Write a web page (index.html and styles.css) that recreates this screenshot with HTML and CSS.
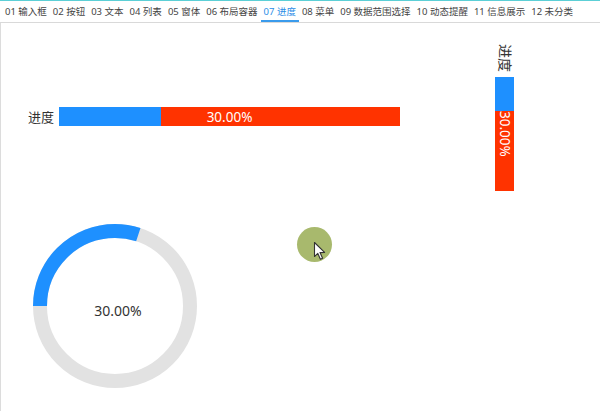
FILE: index.html
```html
<!DOCTYPE html>
<html lang="zh-CN">
<head>
    <meta charset="UTF-8">
    <title>07 进度</title>
    <link rel="stylesheet" href="styles.css">
</head>
<body>
    <div class="app">
        <!-- Tabs -->
        <div class="tabs">
            <span class="tab">01 输入框</span>
            <span class="tab">02 按钮</span>
            <span class="tab">03 文本</span>
            <span class="tab">04 列表</span>
            <span class="tab">05 窗体</span>
            <span class="tab">06 布局容器</span>
            <span class="tab active">07 进度</span>
            <span class="tab">08 菜单</span>
            <span class="tab">09 数据范围选择</span>
            <span class="tab">10 动态提醒</span>
            <span class="tab">11 信息展示</span>
            <span class="tab">12 未分类</span>
        </div>

        <!-- Page -->
        <div class="page">
            <div class="top-row">
                <div class="hbar-group">
                    <span class="bar-label">进度</span>
                    <div class="hbar">
                        <div class="hbar-fill" style="width: 30%;"></div>
                        <span class="bar-text">30.00%</span>
                    </div>
                </div>

                <div class="vbar-group">
                    <span class="vbar-label">进度</span>
                    <div class="vbar">
                        <div class="vbar-fill" style="height: 30%;"></div>
                        <span class="vbar-text">30.00%</span>
                    </div>
                </div>
            </div>

            <div class="ring">
                <svg width="170" height="170" viewBox="0 0 170 170">
                    <circle cx="85" cy="85" r="75" fill="none" stroke="#e2e2e2" stroke-width="14"/>
                    <circle cx="85" cy="85" r="75" fill="none" stroke="#1e90ff" stroke-width="14"
                        stroke-dasharray="141.37 471.24" transform="rotate(180 85 85)"/>
                </svg>
                <span class="ring-text">30.00%</span>
            </div>

            <!-- mouse pointer highlight -->
            <div class="cursor-dot">
                <svg width="14" height="20" viewBox="0 0 14 20">
                    <path d="M1.5 1.5 L1.5 15.5 L4.8 12.4 L7.4 18.2 L9.6 17.2 L7 11.6 L11.6 11.4 Z" fill="#fff" stroke="#333" stroke-width="1.1" stroke-linejoin="round"/>
                </svg>
            </div>
        </div>
    </div>
</body>
</html>
```

FILE: styles.css
```css
/* Base */
body {
    margin: 0;
    background: #fff;
    font-family: "Noto Sans", "Noto Sans CJK SC", sans-serif;
    color: #333;
}

.app {
    width: 600px;
    height: 411px;
    border-top: 1px solid #5ccfd6;
    box-sizing: border-box;
    display: flex;
    flex-direction: column;
    overflow: hidden;
}

/* Tab strip */
.tabs {
    height: 21px;
    display: flex;
    align-items: center;
    gap: 6px;
    padding-left: 5px;
    border-bottom: 1px solid #d9d9d9;
    font-size: 9.5px;
    color: #444;
    white-space: nowrap;
}

.tab {
    position: relative;
    line-height: 21px;
}

.tab.active {
    color: #2b8ce6;
}

.tab.active::after {
    content: "";
    position: absolute;
    left: -3px;
    right: -3px;
    bottom: 0;
    height: 2px;
    background: #3a9bec;
}

/* Page body */
.page {
    position: relative;
    flex: 1;
    border-left: 1px solid #dcdcdc;
}

.top-row {
    display: flex;
    align-items: flex-start;
    padding: 21px 0 0 27px;
}

/* Horizontal progress */
.hbar-group {
    display: flex;
    align-items: center;
    gap: 5px;
    margin-top: 63px;
}

.bar-label {
    font-size: 13px;
    color: #333;
}

.hbar {
    position: relative;
    width: 341px;
    height: 19px;
    background: #ff3300;
    display: flex;
    align-items: center;
    justify-content: center;
}

.hbar-fill {
    position: absolute;
    left: 0;
    top: 0;
    bottom: 0;
    background: #1e90ff;
}

.bar-text {
    position: relative;
    color: #fff;
    font-size: 13.5px;
}

/* Vertical progress */
.vbar-group {
    margin-left: 95px;
    display: flex;
    flex-direction: column;
    align-items: center;
    gap: 5px;
}

.vbar-label {
    writing-mode: vertical-rl;
    text-orientation: sideways;
    font-size: 14px;
    line-height: 18px;
    color: #333;
}

.vbar {
    position: relative;
    width: 19px;
    height: 114px;
    background: #ff3300;
    display: flex;
    align-items: center;
    justify-content: center;
}

.vbar-fill {
    position: absolute;
    left: 0;
    right: 0;
    top: 0;
    background: #1e90ff;
}

.vbar-text {
    position: relative;
    writing-mode: vertical-rl;
    text-orientation: sideways;
    color: #fff;
    font-size: 13.5px;
    line-height: 19px;
}

/* Ring progress */
.ring {
    position: relative;
    width: 170px;
    height: 170px;
    margin: 30px 0 0 29px;
}

.ring svg {
    display: block;
}

.ring-text {
    position: absolute;
    inset: 0;
    display: flex;
    align-items: center;
    justify-content: center;
    padding: 8px 0 0 6px;
    font-size: 14px;
    color: #333;
}

/* Cursor overlay */
.cursor-dot {
    position: absolute;
    left: 296px;
    top: 204px;
    width: 35px;
    height: 35px;
    border-radius: 50%;
    background: #a8b96d;
}

.cursor-dot svg {
    position: absolute;
    left: 16px;
    top: 14px;
}
```
